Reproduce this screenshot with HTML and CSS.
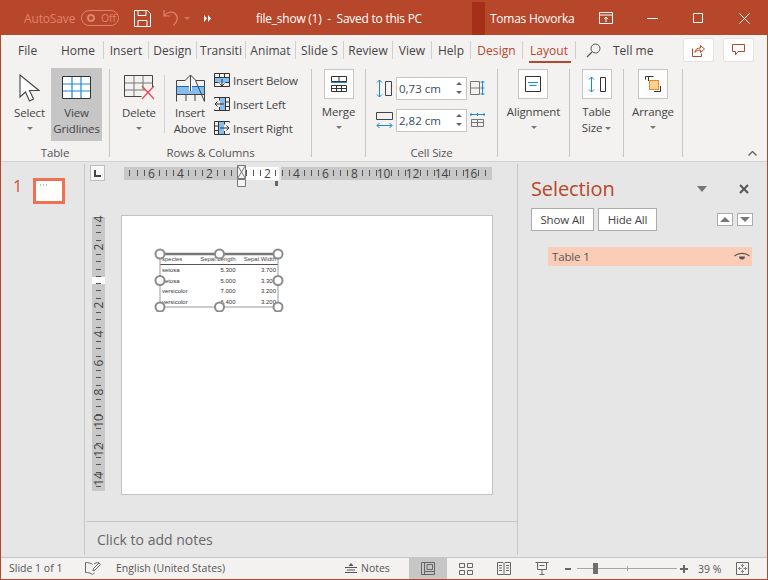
FILE: index.html
```html
<!DOCTYPE html>
<html lang="en">
<head>
<meta charset="utf-8">
<title>file_show (1) - PowerPoint</title>
<link rel="stylesheet" href="styles.css">
</head>
<body>
<div class="app">
  <header class="titlebar">
    <span class="autosave">AutoSave</span>
    <span class="toggle"><i class="dot"></i>Off</span>
    <svg class="tb-save" width="17" height="17" viewBox="0 0 17 17"><path d="M.5.500h13l3 3v13H.500z M4 .5v5h8v-5 M4 16.500v-6h9v6" fill="none" stroke="#fff"/></svg>
    <svg class="tb-undo" width="18" height="18" viewBox="0 0 18 18"><path d="M1 1v6h6M1.500 6.500C4 3 9 2 12 4.500c3.500 3 3 7.500-1.500 12" fill="none" stroke="#E0836C" stroke-width="1.200"/></svg>
    <svg class="tb-caret" width="6" height="3" viewBox="0 0 6 3"><path d="M0 0h6L3 3z" fill="#CF7660"/></svg>
    <svg class="tb-more" width="7" height="7" viewBox="0 0 7 7"><path d="M0 0l3 3.500L0 7zM4 0l3 3.500L4 7z" fill="#fff"/></svg>
    <span class="doc-title">file_show (1)&nbsp; -&nbsp; Saved to this PC</span>
    <span class="user-block"></span>
    <span class="user">Tomas Hovorka</span>
    <svg class="tb-display" width="14" height="12" viewBox="0 0 14 12"><path d="M.5.500h13v11H.500zM.5 3h13M7 10V5M5 7l2-2 2 2" fill="none" stroke="#fff"/></svg>
    <svg class="tb-min" width="11" height="1" viewBox="0 0 11 1"><path d="M0 .5h11" stroke="#fff"/></svg>
    <svg class="tb-max" width="10" height="10" viewBox="0 0 10 10"><path d="M.5.500h9v9h-9z" fill="none" stroke="#fff"/></svg>
    <svg class="tb-close" width="11" height="11" viewBox="0 0 11 11"><path d="M.5.500l10 10M10.500.500l-10 10" stroke="#fff"/></svg>
  </header>

  <nav class="tabs">
    <span class="tab file">File</span>
    <span class="tab t-home sep">Home</span>
    <span class="tab t-insert sep">Insert</span>
    <span class="tab t-design sep">Design</span>
    <span class="tab t-trans sep">Transiti</span>
    <span class="tab t-anim sep">Animat</span>
    <span class="tab t-slide sep">Slide S</span>
    <span class="tab t-review sep">Review</span>
    <span class="tab t-view sep">View</span>
    <span class="tab t-help sep">Help</span>
    <span class="tab t-tdesign sep ctx">Design</span>
    <span class="tab t-layout sep ctx active">Layout</span>
    <svg class="search" width="15" height="15" viewBox="0 0 15 15"><circle cx="9.500" cy="5.500" r="4.500" fill="none" stroke="#555"/><path d="M6 9l-5 5" stroke="#555" stroke-width="1.300"/></svg>
    <span class="tellme">Tell me</span>
    <span class="tab-btn first"><svg width="13" height="13" viewBox="0 0 13 13"><path d="M.5 4.500v8h9v-3M3 8.500c0-3 2-4.500 5.500-4.500V1.500l4 3.500-4 3.500V6C6 6 4 6.500 3 8.500z" fill="none" stroke="#B7472A"/></svg></span>
    <span class="tab-btn"><svg width="13" height="12" viewBox="0 0 13 12"><path d="M.5.500h12v7H6L3.500 11V7.500h-3z" fill="none" stroke="#B7472A"/></svg></span>
  </nav>

  <section class="ribbon">
    <div class="group g-table">
      <div class="group-body">
        <div class="big w-select">
          <span class="big-icon"><svg width="21" height="28" viewBox="0 0 21 28"><path d="M1 1v22l5.500-5 4 9 4-2-4-8.500H20z" fill="#fff" stroke="#444" stroke-width="1.100"/></svg></span>
          <span class="big-label">Select</span>
          <svg class="caret" width="6" height="3" viewBox="0 0 6 3"><path d="M0 0h6L3 3z"/></svg>
        </div>
        <div class="big w-grid on">
          <span class="big-icon"><svg width="29" height="23" viewBox="0 0 29 23"><rect width="29" height="23" fill="#fff"/><path d="M1 8h27M1 15h27M10 1v21M19 1v21" stroke="#1E88D8" fill="none" stroke-width="1.200"/><path d="M.5.500h28v22H.500z" fill="none" stroke="#333"/></svg></span>
          <span class="big-label">View<br>Gridlines</span>
        </div>
      </div>
      <span class="group-label">Table</span>
    </div>

    <div class="group g-rows">
      <div class="group-body">
        <div class="big w-delete">
          <span class="big-icon"><svg width="31" height="25" viewBox="0 0 31 25"><path d="M1 8h27M1 15h20M10 1v21M19 1v14" stroke="#777" fill="none"/><path d="M17.500 21.500H.5v-21h28V13" fill="none" stroke="#444"/><path d="M18 11l12 13M30 11L18 24" stroke="#E8474C" stroke-width="1.200"/></svg></span>
          <span class="big-label">Delete</span>
          <svg class="caret" width="6" height="3" viewBox="0 0 6 3"><path d="M0 0h6L3 3z"/></svg>
        </div>
        <span class="v-sep"></span>
        <div class="big w-above">
          <span class="big-icon"><svg width="29" height="28" viewBox="0 0 29 28"><rect x="1" y="13" width="27" height="7" fill="#85BDEE"/><path d="M.5 27.500V6.500h9M19.500 6.500h9v21zM.5 20.500h28M10 20v7M19 20v7" fill="none" stroke="#444"/><path d="M.5 12.500h28" stroke="#1469B5"/><path d="M14.500 17V8" stroke="#fff" stroke-width="3"/><path d="M14.500 17V1M9.500 6l5-5 5 5" fill="none" stroke="#444"/></svg></span>
          <span class="big-label">Insert<br>Above</span>
        </div>
        <div class="small-col">
          <div class="small">
            <svg width="16" height="14" viewBox="0 0 16 14"><rect x="1" y="5" width="14" height="5" fill="#85BDEE"/><path d="M.5.500h15v13H.500zM.5 4.500h15M5.500.500v4M10.500.500v4M.5 9.500h4M11.500 9.500h4" fill="none" stroke="#333"/><path d="M8 6v7M5.500 10.500L8 13l2.500-2.500" fill="none" stroke="#333"/></svg>
            <span>Insert Below</span>
          </div>
          <div class="small">
            <svg width="16" height="14" viewBox="0 0 16 14"><rect x="6" y="1" width="5" height="12" fill="#85BDEE"/><path d="M.5 1.500v-1h15v13H.5v-1M11.500.500v13M11.500 5h4M11.500 9.500h4M5.500.500v3M5.500 10v4" fill="none" stroke="#333"/><path d="M10 7H1M3.500 4.500L1 7l2.500 2.500" fill="none" stroke="#333"/></svg>
            <span>Insert Left</span>
          </div>
          <div class="small">
            <svg width="16" height="14" viewBox="0 0 16 14"><rect x="5" y="1" width="5" height="12" fill="#85BDEE"/><path d="M15.500 1.500v-1H.5v13h15v-1M4.500.500v13M.5 5h4M.5 9.500h4M10.500.500v3M10.500 10v4" fill="none" stroke="#333"/><path d="M6 7h9M12.500 4.500L15 7l-2.500 2.500" fill="none" stroke="#333"/></svg>
            <span>Insert Right</span>
          </div>
        </div>
      </div>
      <span class="group-label">Rows &amp; Columns</span>
    </div>

    <div class="group g-merge boxed">
      <span class="box"><svg width="16" height="16" viewBox="0 0 16 16"><path d="M.5.500h15v5H.500zM8 .5v5M.5 9.500h15v6H.5zM.5 12.500h15M5.500 9.500v6M10.500 9.500v6" fill="none" stroke="#333"/><path d="M0 6.500h16" stroke="#1E88D8"/></svg></span>
      <span class="big-label">Merge</span>
      <svg class="caret" width="6" height="3" viewBox="0 0 6 3"><path d="M0 0h6L3 3z"/></svg>
    </div>

    <div class="group g-cell">
      <div class="cell-row first">
        <svg width="17" height="19" viewBox="0 0 17 19"><path d="M3.500 1v17M1 3.500L3.500 1 6 3.500M1 15.500L3.500 18 6 15.500" fill="none" stroke="#1E88D8"/><path d="M9.500 2.500h6v14h-6z" fill="none" stroke="#444"/></svg>
        <span class="spin"><span>0,73 cm</span><span class="arrows"><i class="up"></i><i class="down"></i></span></span>
        <svg width="15" height="14" viewBox="0 0 15 14"><path d="M.5.500h9v13h-9zM.5 7h9" fill="none" stroke="#777"/><path d="M12.500 0v14M10.500 1h4M10.500 7h4M10.500 13h4" fill="none" stroke="#1E88D8"/></svg>
      </div>
      <div class="cell-row">
        <svg width="17" height="19" viewBox="0 0 17 19"><path d="M.5 1.500h16v7H.5z" fill="none" stroke="#444"/><path d="M1 14.500h15M3.500 12L1 14.500 3.500 17M13.500 12l2.500 2.500-2.500 2.500" fill="none" stroke="#1E88D8"/></svg>
        <span class="spin"><span>2,82 cm</span><span class="arrows"><i class="up"></i><i class="down"></i></span></span>
        <svg width="15" height="14" viewBox="0 0 15 14"><path d="M0 1.500h15M1 0v3M7.500 0v3M14 0v3" fill="none" stroke="#1E88D8"/><path d="M1.500 6.500h12v7h-12zM7.500 6.500v7M1.500 9.500h12" fill="none" stroke="#777"/></svg>
      </div>
      <span class="group-label">Cell Size</span>
    </div>

    <div class="group g-align boxed">
      <span class="box"><svg width="16" height="16" viewBox="0 0 16 16"><path d="M.5.500h15v15H.5z" fill="none" stroke="#333"/><path d="M3 6.500h10M4.500 9.500h7" stroke="#1E88D8"/></svg></span>
      <span class="big-label">Alignment</span>
      <svg class="caret" width="6" height="3" viewBox="0 0 6 3"><path d="M0 0h6L3 3z"/></svg>
    </div>

    <div class="group g-size boxed">
      <span class="box"><svg width="20" height="17" viewBox="0 0 20 17"><path d="M4.500 1v15M2 3.500L4.500 1 7 3.500M2 13.500L4.500 16 7 13.500" fill="none" stroke="#1E88D8"/><path d="M13.500 1.500h5v14h-5z" fill="none" stroke="#333"/></svg></span>
      <span class="big-label">Table<br>Size <svg class="caret inline" width="6" height="3" viewBox="0 0 6 3"><path d="M0 0h6L3 3z"/></svg></span>
    </div>

    <div class="group g-arrange boxed">
      <span class="box"><svg width="16" height="16" viewBox="0 0 16 16"><path d="M3.500 5V.5h5M.5 3.500v-3h3M15.500 10v5.500H9" fill="none" stroke="#333"/><rect x="4.500" y="4.500" width="9" height="9" fill="#FBD38D" stroke="#E8872E"/></svg></span>
      <span class="big-label">Arrange</span>
      <svg class="caret" width="6" height="3" viewBox="0 0 6 3"><path d="M0 0h6L3 3z"/></svg>
    </div>

    <svg class="collapse" width="9" height="5" viewBox="0 0 9 5"><path d="M.5 4.500l4-4 4 4" fill="none" stroke="#666" stroke-width="1.400"/></svg>
  </section>

  <main class="workspace">
    <aside class="thumbs">
      <span class="thumb-num">1</span>
      <span class="thumb"><i class="thumb-dots"></i></span>
    </aside>

    <div class="center">
      <div class="stage">
        <div class="top-row">
          <span class="tab-stop"><svg width="7" height="7" viewBox="0 0 7 7"><path d="M1 0v6h6" fill="none" stroke="#444" stroke-width="2"/></svg></span>
          <svg class="h-ruler" width="368" height="22" viewBox="124 165 368 22">
            <rect x="124" y="167" width="113" height="13" fill="#C8C8C8"/>
            <rect x="237" y="167" width="42" height="13" fill="#fff"/>
            <rect x="281" y="167" width="211" height="13" fill="#C8C8C8"/>
            <path d="M129.500 170v6M137.500 170v6M144.500 170v6M159.500 170v6M166.500 170v6M173.500 170v6M188.500 170v6M195.500 170v6M202.500 170v6M217.500 170v6M224.500 170v6M231.500 170v6M246.500 170v6M253.500 170v6M260.500 170v6M275.500 170v6M282.500 170v6M289.500 170v6M304.500 170v6M311.500 170v6M318.500 170v6M333.500 170v6M340.500 170v6M347.500 170v6M362.500 170v6M369.500 170v6M376.500 170v6M391.500 170v6M398.500 170v6M405.500 170v6M420.500 170v6M427.500 170v6M434.500 170v6M449.500 170v6M456.500 170v6M463.500 170v6M478.500 170v6M485.500 170v6" stroke="#555"/>
            <g class="ruler-num" text-anchor="middle">
              <text x="151.500" y="177.500">6</text><text x="180.500" y="177.500">4</text><text x="209.500" y="177.500">2</text><text x="267.500" y="177.500">2</text><text x="296.500" y="177.500">4</text><text x="325.500" y="177.500">6</text><text x="354.500" y="177.500">8</text><text x="383.500" y="177.500">10</text><text x="412.500" y="177.500">12</text><text x="441.500" y="177.500">14</text><text x="470.500" y="177.500">16</text>
            </g>
            <path d="M237.500 165.500h8v13h-8zM237.500 165.500l8 13M245.500 165.500l-8 13M237.500 179.500h8v7h-8z" fill="#F3F3F3" stroke="#777"/>
            <rect x="275" y="181" width="3" height="5" fill="#666"/>
          </svg>
        </div>
        <div class="canvas-row">
          <svg class="v-ruler" width="13" height="274" viewBox="92 217 13 274">
            <rect x="92" y="217" width="13" height="60" fill="#C8C8C8"/>
            <rect x="92" y="277" width="13" height="7" fill="#fff"/>
            <rect x="92" y="284" width="13" height="207" fill="#C8C8C8"/>
            <path d="M96 225.500h5M96 232.500h5M96 240.500h5M96 254.500h5M96 261.500h5M96 269.500h5M96 276.500h5M96 283.500h5M96 290.500h5M96 298.500h5M96 312.500h5M96 319.500h5M96 327.500h5M96 341.500h5M96 348.500h5M96 356.500h5M96 370.500h5M96 377.500h5M96 385.500h5M96 399.500h5M96 406.500h5M96 414.500h5M96 428.500h5M96 435.500h5M96 443.500h5M96 457.500h5M96 464.500h5M96 472.500h5M96 486.500h5" stroke="#555"/>
            <g class="ruler-num" text-anchor="middle">
              <text transform="translate(102.500 219) rotate(-90)">4</text><text transform="translate(102.500 247) rotate(-90)">2</text><text transform="translate(102.500 305) rotate(-90)">2</text><text transform="translate(102.500 334) rotate(-90)">4</text><text transform="translate(102.500 363) rotate(-90)">6</text><text transform="translate(102.500 392) rotate(-90)">8</text><text transform="translate(102.500 421) rotate(-90)">10</text><text transform="translate(102.500 450) rotate(-90)">12</text><text transform="translate(102.500 479) rotate(-90)">14</text>
            </g>
          </svg>
          <div class="slide">
            <table class="data">
              <tr class="head"><td>species</td><td>Sepal.Length</td><td>Sepal.Width</td></tr>
              <tr><td>setosa</td><td>5.300</td><td>3.700</td></tr>
              <tr><td>setosa</td><td>5.000</td><td>3.300</td></tr>
              <tr><td>versicolor</td><td>7.000</td><td>3.200</td></tr>
              <tr><td>versicolor</td><td>6.400</td><td>3.200</td></tr>
            </table>
            <svg class="selection" width="130" height="64" viewBox="154 248 130 64">
              <path d="M160 254h118" stroke="#777" stroke-width="2.500"/>
              <path d="M160 264.500h118" stroke="#555"/>
              <path d="M160 254v53h118v-53" fill="none" stroke="#999"/>
              <g fill="#fff" stroke="#8C8C8C" stroke-width="2">
                <circle cx="160" cy="254" r="4.500"/><circle cx="219.500" cy="254" r="4.500"/><circle cx="278" cy="254" r="4.500"/>
                <circle cx="160" cy="280.500" r="4.500"/><circle cx="278" cy="280.500" r="4.500"/>
                <circle cx="160" cy="307" r="4.500"/><circle cx="219.500" cy="307" r="4.500"/><circle cx="278" cy="307" r="4.500"/>
              </g>
            </svg>
          </div>
        </div>
      </div>
      <div class="notes">Click to add notes</div>
    </div>

    <aside class="pane">
      <div class="pane-head">
        <h2>Selection</h2>
        <svg class="pane-menu" width="10" height="6" viewBox="0 0 10 6"><path d="M0 0h10L5 6z" fill="#777"/></svg>
        <svg class="pane-close" width="10" height="10" viewBox="0 0 10 10"><path d="M1 1l8 8M9 1l-8 8" stroke="#555" stroke-width="2"/></svg>
      </div>
      <div class="pane-btns">
        <span class="btn show">Show All</span>
        <span class="btn hide">Hide All</span>
        <span class="mini up-btn"><svg width="10" height="5" viewBox="0 0 10 5"><path d="M0 5h10L5 0z" fill="#777"/></svg></span>
        <span class="mini"><svg width="10" height="5" viewBox="0 0 10 5"><path d="M0 0h10L5 5z" fill="#777"/></svg></span>
      </div>
      <div class="pane-item">
        <span>Table 1</span>
        <svg width="16" height="9" viewBox="0 0 16 9"><path d="M.5 4C4.500.5 11.500.5 15.500 4" fill="none" stroke="#555" stroke-width="1.100"/><path d="M5 4.500a3 3 0 0 0 6 0z" fill="#555"/></svg>
      </div>
    </aside>
  </main>

  <footer class="statusbar">
    <span class="st-slide">Slide 1 of 1</span>
    <svg class="st-spell" width="16" height="13" viewBox="0 0 16 13"><path d="M7.500 2.500C6 1 3 .5.500.5v10c2.500 0 5 .5 7 2 .5-.5 1-1 2-1.300M9 2C10 1 12 .5 14 .5" fill="none" stroke="#666"/><path d="M8 9l.5-2.500L14 1l1.500 1.500L10 8z" fill="none" stroke="#666"/></svg>
    <span class="st-lang">English (United States)</span>
    <svg class="st-notes" width="12" height="11" viewBox="0 0 12 11"><path d="M3.500 3L6 0l2.500 3z" fill="#555"/><path d="M0 4.500h12M2 7h8M0 9.500h12" stroke="#555"/></svg>
    <span class="st-notes-label">Notes</span>
    <span class="view on"><svg width="14" height="13" viewBox="0 0 14 13"><path d="M.5.500h13v12H.5zM3.500.5v12M6 2.500h5.500v5H6zM3.500 9.500h10" fill="none" stroke="#666"/></svg></span>
    <span class="view"><svg width="14" height="12" viewBox="0 0 14 12"><path d="M.5.500h5v4h-5zM8.500.500h5v4h-5zM.5 7.500h5v4h-5zM8.500 7.500h5v4h-5z" fill="none" stroke="#666"/></svg></span>
    <span class="view"><svg width="14" height="13" viewBox="0 0 14 13"><path d="M.5.500h5.500l1 1 1-1h5.500v12H8l-1-.5-1 .5H.5zM7 1.500v10M2 3.500h3M2 6h3M2 8.500h3M9 3.500h3M9 6h3M9 8.500h3" fill="none" stroke="#666"/></svg></span>
    <span class="view"><svg width="14" height="13" viewBox="0 0 14 13"><path d="M.5.500h13M2.500.500v7h9v-7M7 7.500v5M4.500 12.500h5M4.500 3.500h5" fill="none" stroke="#666"/></svg></span>
    <span class="zoom-minus"></span>
    <span class="slider"><i class="mid"></i><i class="thumb-s"></i></span>
    <svg class="zoom-plus" width="8" height="8" viewBox="0 0 8 8"><path d="M0 4h8M4 0v8" stroke="#666" stroke-width="2"/></svg>
    <span class="st-zoom">39 %</span>
    <svg class="st-fit" width="13" height="13" viewBox="0 0 13 13"><path d="M.5.500h12v12H.5z" fill="none" stroke="#666"/><path d="M6.500 2.500v3M5 4l1.500-1.500L8 4M6.500 10.500v-3M5 9l1.500 1.500L8 9M2.500 6.500h3M4 5L2.500 6.500 4 8M10.500 6.500h-3M9 5l1.500 1.500L9 8" fill="none" stroke="#666" stroke-width=".8"/></svg>
  </footer>
</div>
</body>
</html>
```
FILE: styles.css
```css
* { box-sizing: border-box; }
html, body { margin: 0; padding: 0; }
body { width: 768px; height: 580px; overflow: hidden; font-family: "Open Sans", "Noto Sans", sans-serif; font-size: 11.5px; color: #444; letter-spacing: -.15px; }
svg { display: block; flex: none; }

.app { width: 768px; height: 580px; border: 1px solid #B7472A; display: flex; flex-direction: column; background: #E6E6E6; }

/* title bar */
.titlebar { height: 34px; flex: none; background: #B7472A; display: flex; align-items: center; color: #fff; font-size: 12px; padding-left: 23px; }
.autosave { width: 57px; color: #E0836C; }
.toggle { width: 38px; height: 16px; border: 1px solid #E0836C; border-radius: 8px; color: #E0836C; font-size: 10.5px; display: flex; align-items: center; padding-left: 5px; gap: 6px; }
.dot { width: 8px; height: 8px; border-radius: 50%; border: 2px solid #E0836C; flex: none; }
.tb-save { margin-left: 15px; }
.tb-undo { margin-left: 12px; }
.tb-caret { margin-left: 3px; }
.tb-more { margin-left: 14px; }
.doc-title { margin-left: 45px; width: 216px; white-space: nowrap; letter-spacing: -.25px; }
.user-block { width: 13px; height: 33px; align-self: flex-end; background: #A5301A; }
.user { margin-left: 5px; width: 109px; white-space: nowrap; letter-spacing: -.25px; }
.tb-min { margin-left: 34px; }
.tb-max { margin-left: 35px; }
.tb-close { margin-left: 36px; }

/* tabs */
.tabs { height: 30px; flex: none; background: #F3F2F1; display: flex; align-items: center; font-size: 12px; position: relative; }
.tab { height: 18px; line-height: 19px; text-align: center; white-space: nowrap; flex: none; letter-spacing: .05px; }
.tab.sep { border-right: 1px solid #CFCFCF; }
.file { width: 52px; text-align: left; padding-left: 17px; }
.t-home { width: 51px; }
.t-insert { width: 45px; }
.t-design { width: 48px; }
.t-trans { width: 49px; }
.t-anim { width: 50px; }
.t-slide { width: 48px; }
.t-review { width: 49px; }
.t-view { width: 39px; }
.t-help { width: 39px; }
.t-tdesign { width: 52px; }
.t-layout { width: 53px; }
.ctx { color: #B7472A; }
.active { position: relative; }
.active::after { content: ""; position: absolute; left: 6px; right: 4px; top: 20px; height: 2px; background: #B7472A; }
.search { margin-left: 10px; }
.tellme { margin-left: 12px; width: 70px; letter-spacing: 0; }
.tab-btn { width: 31px; height: 24px; background: #fff; border: 1px solid #E3E2E1; border-radius: 2px; display: flex; align-items: center; justify-content: center; margin-left: 9px; }
.tab-btn.first { margin-left: 0; }

/* ribbon */
.ribbon { height: 97px; flex: none; background: #F3F2F1; border-bottom: 1px solid #D2D2D2; padding-top: 4px; display: flex; position: relative; }
.group { height: 88px; flex: none; border-right: 1px solid #C6C6C6; display: flex; flex-direction: column; align-items: center; position: relative; }
.group-body { display: flex; height: 72px; width: 100%; }
.group-label { margin-top: auto; margin-bottom: -4px; height: 16px; line-height: 16px; color: #555; text-align: center; white-space: nowrap; }
.g-table { width: 109px; }
.g-table .group-body { padding-left: 7px; margin-top: -1px; height: 73px; }
.g-rows { width: 202px; }
.g-rows .group-body { padding-left: 10px; margin-top: -1px; height: 73px; }
.g-merge { width: 54px; }
.g-cell { width: 132px; padding-top: 8px; padding-left: 10px; align-items: flex-start; }
.g-align { width: 72px; }
.g-align .box { margin-right: 2px; }
.g-size { width: 54px; }
.g-arrange { width: 59px; }

.big { display: flex; flex-direction: column; align-items: center; flex: none; }
.big-icon { height: 37px; display: flex; align-items: center; justify-content: center; padding-top: 2px; }
.big-label { line-height: 16px; text-align: center; white-space: nowrap; color: #444; }
.caret { fill: #777; margin-top: 6px; }
.caret.inline { display: inline-block; vertical-align: middle; margin-top: 0; }
.w-select { width: 43px; }
.w-grid { width: 51px; }
.w-grid.on { background: #C6C6C6; }
.w-delete { width: 38px; }
.w-above { width: 50px; }
.v-sep { width: 1px; height: 58px; margin: 7px 0 0 6px; background: #D2D2D2; flex: none; }
.small-col { display: flex; flex-direction: column; margin-left: -1px; }
.small { height: 24px; display: flex; align-items: center; gap: 3px; white-space: nowrap; }

.box { width: 30px; height: 30px; background: #FDFDFD; border: 1px solid #C6C6C6; display: flex; align-items: center; justify-content: center; flex: none; }
.boxed .big-label { margin-top: 5px; }

.cell-row { display: flex; align-items: center; gap: 3px; height: 22px; margin-bottom: 10px; }
.spin { width: 71px; height: 23px; background: #fff; border: 1px solid #C6C6C6; display: flex; align-items: center; justify-content: space-between; padding: 0 4px 0 2px; letter-spacing: 0; color: #3A4A5E; flex: none; }
.arrows { display: flex; flex-direction: column; gap: 6px; }
.arrows i { display: block; width: 0; height: 0; border-left: 3px solid transparent; border-right: 3px solid transparent; }
.arrows .up { border-bottom: 3px solid #666; }
.arrows .down { border-top: 3px solid #666; }
.g-cell .group-label { align-self: center; margin-left: -10px; margin-top: auto; }
.collapse { position: absolute; right: 10px; bottom: 5px; }

/* workspace */
.workspace { flex: 1; display: flex; min-height: 0; padding-top: 2px; padding-bottom: 2px; }
.thumbs { width: 83px; flex: none; padding: 14px 0 0 12px; display: flex; align-items: flex-start; font-size: 16px; }
.thumb-num { width: 20px; line-height: 16px; color: #C9573A; }
.thumb { width: 32px; height: 26px; background: #fff; border: 3px solid #F0704F; display: block; }
.thumb-dots { display: block; width: 8px; height: 2px; margin: 3px 0 0 4px; background: repeating-linear-gradient(90deg, #bbb 0 1px, transparent 1px 3px); }
.center { width: 434px; flex: none; border-left: 1px solid #C6C6C6; border-right: 1px solid #C6C6C6; display: flex; flex-direction: column; }
.stage { flex: 1; padding: 1px 0 0 5px; min-height: 0; }
.top-row { display: flex; height: 50px; }
.tab-stop { width: 15px; height: 16px; background: #F8F8F8; border: 1px solid #BDBDBD; display: flex; align-items: center; justify-content: center; flex: none; }
.h-ruler { margin-left: 19px; overflow: visible; }
.ruler-num { font-size: 12px; fill: #444; font-family: "Open Sans", sans-serif; letter-spacing: 0; }
.canvas-row { display: flex; align-items: flex-start; }
.v-ruler { margin: 2px 0 0 2px; overflow: visible; }
.slide { width: 372px; height: 280px; margin-left: 16px; background: #fff; border: 1px solid #C2C2C2; position: relative; flex: none; }
.data { position: absolute; left: 38px; top: 38px; width: 118px; border-collapse: collapse; font-family: "Liberation Sans", sans-serif; font-size: 6px; letter-spacing: 0; color: #333; table-layout: fixed; }
.data td { height: 10.700px; padding: 0 2px; text-align: right; white-space: nowrap; overflow: hidden; }
.data td:first-child { text-align: left; width: 37px; }
.data tr.head td { color: #444; overflow: visible; }
.selection { position: absolute; left: 32px; top: 32px; }
.notes { height: 34px; flex: none; margin-left: 2px; border-top: 1px solid #C6C6C6; padding: 8px 0 0 10px; font-size: 14px; line-height: 20px; color: #666; letter-spacing: 0; }

/* selection pane */
.pane { flex: 1; padding: 13px 14px 0 13px; min-width: 0; }
.pane-head { display: flex; align-items: center; height: 24px; }
.pane-head h2 { margin: 0; font-weight: 400; font-size: 20px; line-height: 24px; color: #B7472A; width: 166px; letter-spacing: -.1px; }
.pane-close { margin-left: 32px; }
.pane-btns { display: flex; align-items: center; margin-top: 7px; }
.btn { height: 23px; background: #fff; border: 1px solid #ABABAB; line-height: 22px; text-align: center; font-size: 11.500px; color: #444; flex: none; }
.show { width: 63px; }
.hide { width: 59px; margin-left: 4px; }
.mini { width: 16px; height: 13px; background: #fff; border: 1px solid #ABABAB; display: flex; align-items: center; justify-content: center; margin-left: 4px; }
.up-btn { margin-left: 60px; }
.pane-item { margin: 16px 0 0 17px; width: 204px; height: 19px; background: #FBCDB7; display: flex; align-items: center; justify-content: space-between; padding: 0 2px 0 4px; color: #555; }

/* status */
.statusbar { height: 22px; flex: none; background: #F3F2F1; border-top: 1px solid #C6C6C6; display: flex; align-items: center; font-size: 10.500px; color: #555; letter-spacing: 0; }
.st-slide, .st-lang, .st-notes-label { margin-top: -2px; }
.st-slide { margin-left: 8px; width: 76px; }
.st-lang { margin-left: 15px; width: 229px; }
.st-notes-label { margin-left: 4px; width: 48px; }
.view { width: 38px; height: 21px; display: flex; align-items: center; justify-content: center; flex: none; }
.view.on { background: #C6C6C6; }
.zoom-minus { width: 6px; height: 2px; background: #666; margin-left: 4px; }
.slider { width: 100px; height: 1px; background: #A6A6A6; margin-left: 6px; position: relative; }
.slider .mid { position: absolute; left: 50px; top: -2px; width: 1px; height: 5px; background: #A6A6A6; }
.slider .thumb-s { position: absolute; left: 16px; top: -5px; width: 5px; height: 11px; background: #6E6E6E; }
.zoom-plus { margin-left: 3px; }
.st-zoom { margin-left: 10px; width: 38px; }
```
